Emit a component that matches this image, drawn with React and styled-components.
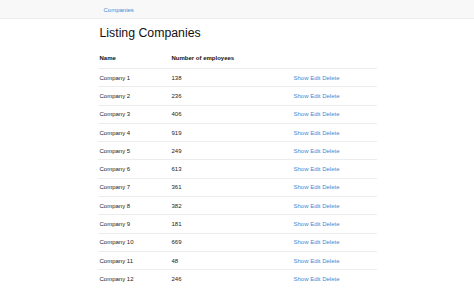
import React from 'react';
import styled, {createGlobalStyle} from "styled-components";

const companies = [
    {name: 'Company 1', employees: 138},
    {name: 'Company 2', employees: 236},
    {name: 'Company 3', employees: 406},
    {name: 'Company 4', employees: 919},
    {name: 'Company 5', employees: 249},
    {name: 'Company 6', employees: 613},
    {name: 'Company 7', employees: 361},
    {name: 'Company 8', employees: 382},
    {name: 'Company 9', employees: 181},
    {name: 'Company 10', employees: 669},
    {name: 'Company 11', employees: 48},
    {name: 'Company 12', employees: 246},
];

const App = () => {
    return (
        <>
            <GlobalStyle/>
            <Navbar>
                <NavInner>
                    <Brand href="#">Companies</Brand>
                </NavInner>
            </Navbar>
            <Container>
                <Title>Listing Companies</Title>
                <Table>
                    <thead>
                    <tr>
                        <HeadCell width={68}>Name</HeadCell>
                        <HeadCell width={118}>Number of employees</HeadCell>
                        <HeadCell/>
                    </tr>
                    </thead>
                    <tbody>
                    {companies.map(company => (
                        <tr key={company.name}>
                            <Cell>{company.name}</Cell>
                            <Cell>{company.employees}</Cell>
                            <Cell>
                                <Link href="#">Show</Link> <Link href="#">Edit</Link> <Link href="#">Delete</Link>
                            </Cell>
                        </tr>
                    ))}
                    </tbody>
                </Table>
            </Container>
        </>
    );
};

const GlobalStyle = createGlobalStyle`
  body {
    margin: 0;
    font-family: "Liberation Sans", Arial, sans-serif;
    color: #222;
    background: #fff;
  }
`;

const Navbar = styled.nav`
  height: 18px;
  background: #f8f8f8;
  border-bottom: 1px solid #ececec;
`;

const NavInner = styled.div`
  width: 279px;
  margin: 0 auto;
  padding-left: 6px;
  box-sizing: border-box;
  display: flex;
  align-items: center;
  height: 100%;
`;

const Brand = styled.a`
  font-size: 6px;
  color: #3b8ad6;
  text-decoration: none;
  padding-top: 1px;
`;

const Container = styled.main`
  width: 279px;
  margin: 0 auto;
  padding-top: 8px;
`;

const Title = styled.h1`
  margin: 0 0 0 2px;
  font-size: 12.3px;
  line-height: 13.5px;
  font-weight: 400;
  color: #111;
`;

const Table = styled.table`
  width: 100%;
  margin-top: 7.5px;
  border-collapse: collapse;
  table-layout: fixed;
  font-size: 6px;
`;

const HeadCell = styled.th`
  width: ${props => props.width ? props.width + 'px' : 'auto'};
  height: 20px;
  padding: 0 2px;
  text-align: left;
  vertical-align: middle;
  font-weight: 700;
  color: #111;
  border-bottom: 1px solid #ececec;
`;

const Cell = styled.td`
  height: 17.3px;
  padding: 0 2px;
  vertical-align: middle;
  border-top: 1px solid #ececec;
  white-space: nowrap;
`;

const Link = styled.a`
  color: #3b8ad6;
  text-decoration: none;
`;

export default App;
